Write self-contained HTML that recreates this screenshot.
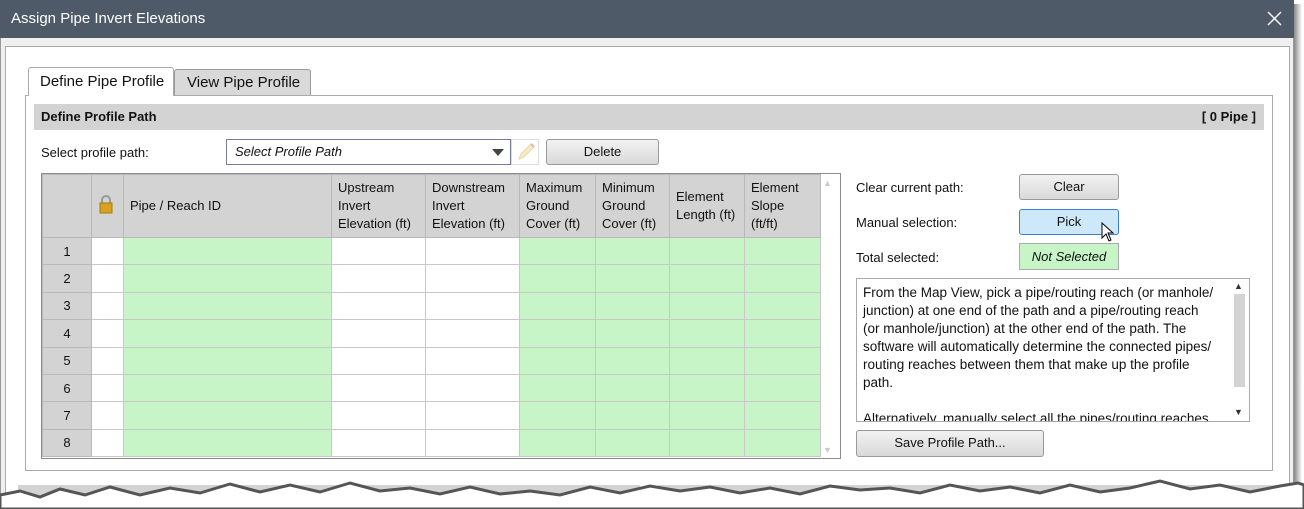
<!DOCTYPE html>
<html><head><meta charset="utf-8"><style>
*{box-sizing:border-box;margin:0;padding:0}
body{width:1304px;height:509px;background:#fff;position:relative;overflow:hidden;font-family:"Liberation Sans",sans-serif;font-size:13px;color:#111}
.a{position:absolute}
.btn{position:absolute;border:1px solid #9a9a9a;border-radius:3px;background:linear-gradient(#f2f2f2,#d9d9d9);text-align:center;font-size:13px;line-height:23px}
table{border-collapse:collapse;table-layout:fixed}
td{border:1px solid #c8c8c8;height:27.4px;padding:0}
th{background:#d3d3d3;border:1px solid #b8b8b8;font-weight:normal;text-align:left;vertical-align:middle;padding:0 6px;line-height:18px;font-size:13px;height:63px}
td.n{background:#d3d3d3;text-align:center;border-color:#b8b8b8}
td.g{background:#c8f5c8}
td.w{background:#fff}
</style></head><body>
<div class="a" style="left:1294px;top:4px;width:8px;height:490px;background:linear-gradient(90deg,#888,#fff)"></div>
<div class="a" style="left:0;top:0;width:1294px;height:38px;background:#4f5a68;color:#fff;font-size:15px;line-height:38px;padding-left:11px">Assign Pipe Invert Elevations</div>
<svg class="a" style="left:1267px;top:11px" width="15" height="15"><path d="M1 1L14 14M14 1L1 14" stroke="#fff" stroke-width="1.4"/></svg>
<div class="a" style="left:0;top:38px;width:1294px;height:471px;background:#f0f0f0;border-left:1px solid #999;border-right:1px solid #999"></div>
<div class="a" style="left:5px;top:46px;width:1285px;height:463px;background:#fff;border:1px solid #aaa"></div>
<div class="a" style="left:25px;top:95px;width:1248px;height:376px;border:1px solid #aaa;background:#fff"></div>
<div class="a" style="left:28px;top:67px;width:146px;height:29px;border:1px solid #aaa;border-bottom:none;border-radius:3px 3px 0 0;background:#fff;font-size:15px;line-height:28px;padding-left:11px">Define Pipe Profile</div>
<div class="a" style="left:174px;top:69px;width:137px;height:26px;border:1px solid #999;border-bottom:none;border-radius:3px 3px 0 0;background:#d9d9d9;font-size:15px;line-height:25px;padding-left:12px">View Pipe Profile</div>
<div class="a" style="left:34px;top:104px;width:1230px;height:26px;background:#d3d3d3;font-weight:bold;line-height:26px;padding-left:7px">Define Profile Path</div>
<div class="a" style="left:1190px;top:104px;width:66px;height:26px;font-weight:bold;line-height:26px;text-align:right">[ 0 Pipe ]</div>
<div class="a" style="left:41px;top:145px">Select profile path:</div>
<div class="a" style="left:226px;top:139px;width:285px;height:26px;border:1px solid #7a7a9a;font-style:italic;line-height:24px;padding-left:8px">Select Profile Path</div>
<div class="a" style="left:492px;top:149px;width:0;height:0;border-left:6px solid transparent;border-right:6px solid transparent;border-top:7px solid #444"></div>
<div class="a" style="left:511px;top:139px;width:28px;height:26px;border:1px solid #ddd"></div>
<svg class="a" style="left:514px;top:141px" width="22" height="22"><path d="M5 18 L7 13 L17 3 L20 6 L10 16 Z" fill="#f6ecc4" stroke="#e4d7a8"/><path d="M17 3L20 6" stroke="#f0b0b0" stroke-width="2"/></svg>
<div class="btn" style="left:546px;top:139px;width:113px;height:26px">Delete</div>
<div class="a" style="left:41px;top:173px;width:800px;height:286px;border:1px solid #8a8a9a;background:#fff"></div>
<table class="a" style="left:42px;top:174px;width:778px">
<colgroup><col style="width:49px"><col style="width:32px"><col style="width:208px"><col style="width:94px"><col style="width:94px"><col style="width:76px"><col style="width:74px"><col style="width:75px"><col style="width:76px"></colgroup>
<tr><th></th><th style="padding:0 6px"><svg width="16" height="20"><path d="M4 9V6a4 4 0 0 1 8 0v3" fill="none" stroke="#999" stroke-width="2"/><rect x="2" y="9" width="12" height="10" fill="#d9a21c" stroke="#a8780a"/></svg></th><th>Pipe / Reach ID</th><th>Upstream Invert Elevation (ft)</th><th>Downstream Invert Elevation (ft)</th><th>Maximum Ground Cover (ft)</th><th>Minimum Ground Cover (ft)</th><th>Element Length (ft)</th><th>Element Slope (ft/ft)</th></tr>
<tr><td class="n">1</td><td class="w"></td><td class="g"></td><td class="w"></td><td class="w"></td><td class="g"></td><td class="g"></td><td class="g"></td><td class="g"></td></tr>
<tr><td class="n">2</td><td class="w"></td><td class="g"></td><td class="w"></td><td class="w"></td><td class="g"></td><td class="g"></td><td class="g"></td><td class="g"></td></tr>
<tr><td class="n">3</td><td class="w"></td><td class="g"></td><td class="w"></td><td class="w"></td><td class="g"></td><td class="g"></td><td class="g"></td><td class="g"></td></tr>
<tr><td class="n">4</td><td class="w"></td><td class="g"></td><td class="w"></td><td class="w"></td><td class="g"></td><td class="g"></td><td class="g"></td><td class="g"></td></tr>
<tr><td class="n">5</td><td class="w"></td><td class="g"></td><td class="w"></td><td class="w"></td><td class="g"></td><td class="g"></td><td class="g"></td><td class="g"></td></tr>
<tr><td class="n">6</td><td class="w"></td><td class="g"></td><td class="w"></td><td class="w"></td><td class="g"></td><td class="g"></td><td class="g"></td><td class="g"></td></tr>
<tr><td class="n">7</td><td class="w"></td><td class="g"></td><td class="w"></td><td class="w"></td><td class="g"></td><td class="g"></td><td class="g"></td><td class="g"></td></tr>
<tr><td class="n">8</td><td class="w"></td><td class="g"></td><td class="w"></td><td class="w"></td><td class="g"></td><td class="g"></td><td class="g"></td><td class="g"></td></tr>
</table>
<div class="a" style="left:823px;top:178px;color:#ccc;font-size:9px">▲</div>
<div class="a" style="left:823px;top:445px;color:#ccc;font-size:9px">▼</div>
<div class="a" style="left:856px;top:180px">Clear current path:</div>
<div class="btn" style="left:1019px;top:174px;width:100px;height:26px">Clear</div>
<div class="a" style="left:856px;top:215px">Manual selection:</div>
<div class="btn" style="left:1019px;top:209px;width:100px;height:26px;background:#cde8f8;border-color:#3c7fd4">Pick</div>
<svg class="a" style="left:1101px;top:222px" width="14" height="20"><path d="M1 1V16L5 12L8 19L10 18L7 11H12Z" fill="#fff" stroke="#000"/></svg>
<div class="a" style="left:856px;top:250px">Total selected:</div>
<div class="a" style="left:1019px;top:243px;width:100px;height:27px;background:#c8f5c8;border:1px solid #aaa;text-align:center;line-height:25px;font-style:italic">Not Selected</div>
<div class="a" style="left:856px;top:278px;width:394px;height:144px;border:1px solid #aaa;overflow:hidden;padding:5px 0 0 6px;line-height:18px;font-size:13.5px;white-space:nowrap">From the Map View, pick a pipe/routing reach (or manhole/<br>junction) at one end of the path and a pipe/routing reach<br>(or manhole/junction) at the other end of the path. The<br>software will automatically determine the connected pipes/<br>routing reaches between them that make up the profile<br>path.<br><br>Alternatively, manually select all the pipes/routing reaches</div>
<div class="a" style="left:1232px;top:279px;width:17px;height:142px;background:#fff"></div>
<div class="a" style="left:1234px;top:294px;width:11px;height:93px;background:#d3d3d3"></div>
<div class="a" style="left:1234px;top:281px;font-size:9px;color:#333">▲</div>
<div class="a" style="left:1234px;top:407px;font-size:9px;color:#333">▼</div>
<div class="btn" style="left:856px;top:430px;width:188px;height:27px">Save Profile Path...</div>
<div class="a" style="left:18px;top:485px;width:622px;height:24px;background:#d3d3d3"></div>
<div class="a" style="left:658px;top:485px;width:622px;height:24px;background:#d3d3d3"></div>
<svg class="a" style="left:0;top:475px" width="1304" height="34">
<path d="M0 20 L20 16 L40 22 L60 14 L85 20 L110 12 L140 20 L170 13 L200 18 L230 9 L260 17 L290 10 L320 17 L350 8 L380 16 L410 13 L440 19 L470 12 L500 19 L530 16 L560 20 L590 12 L620 18 L650 11 L680 16 L710 12 L740 18 L770 13 L800 19 L830 11 L860 15 L890 13 L920 18 L950 10 L980 16 L1010 12 L1040 18 L1070 10 L1100 17 L1130 13 L1160 6 L1190 14 L1220 10 L1250 17 L1280 11 L1298 8 L1304 10 L1304 34 L0 34Z" fill="#fff" stroke="#555" stroke-width="3"/>
</svg>
</body></html>
